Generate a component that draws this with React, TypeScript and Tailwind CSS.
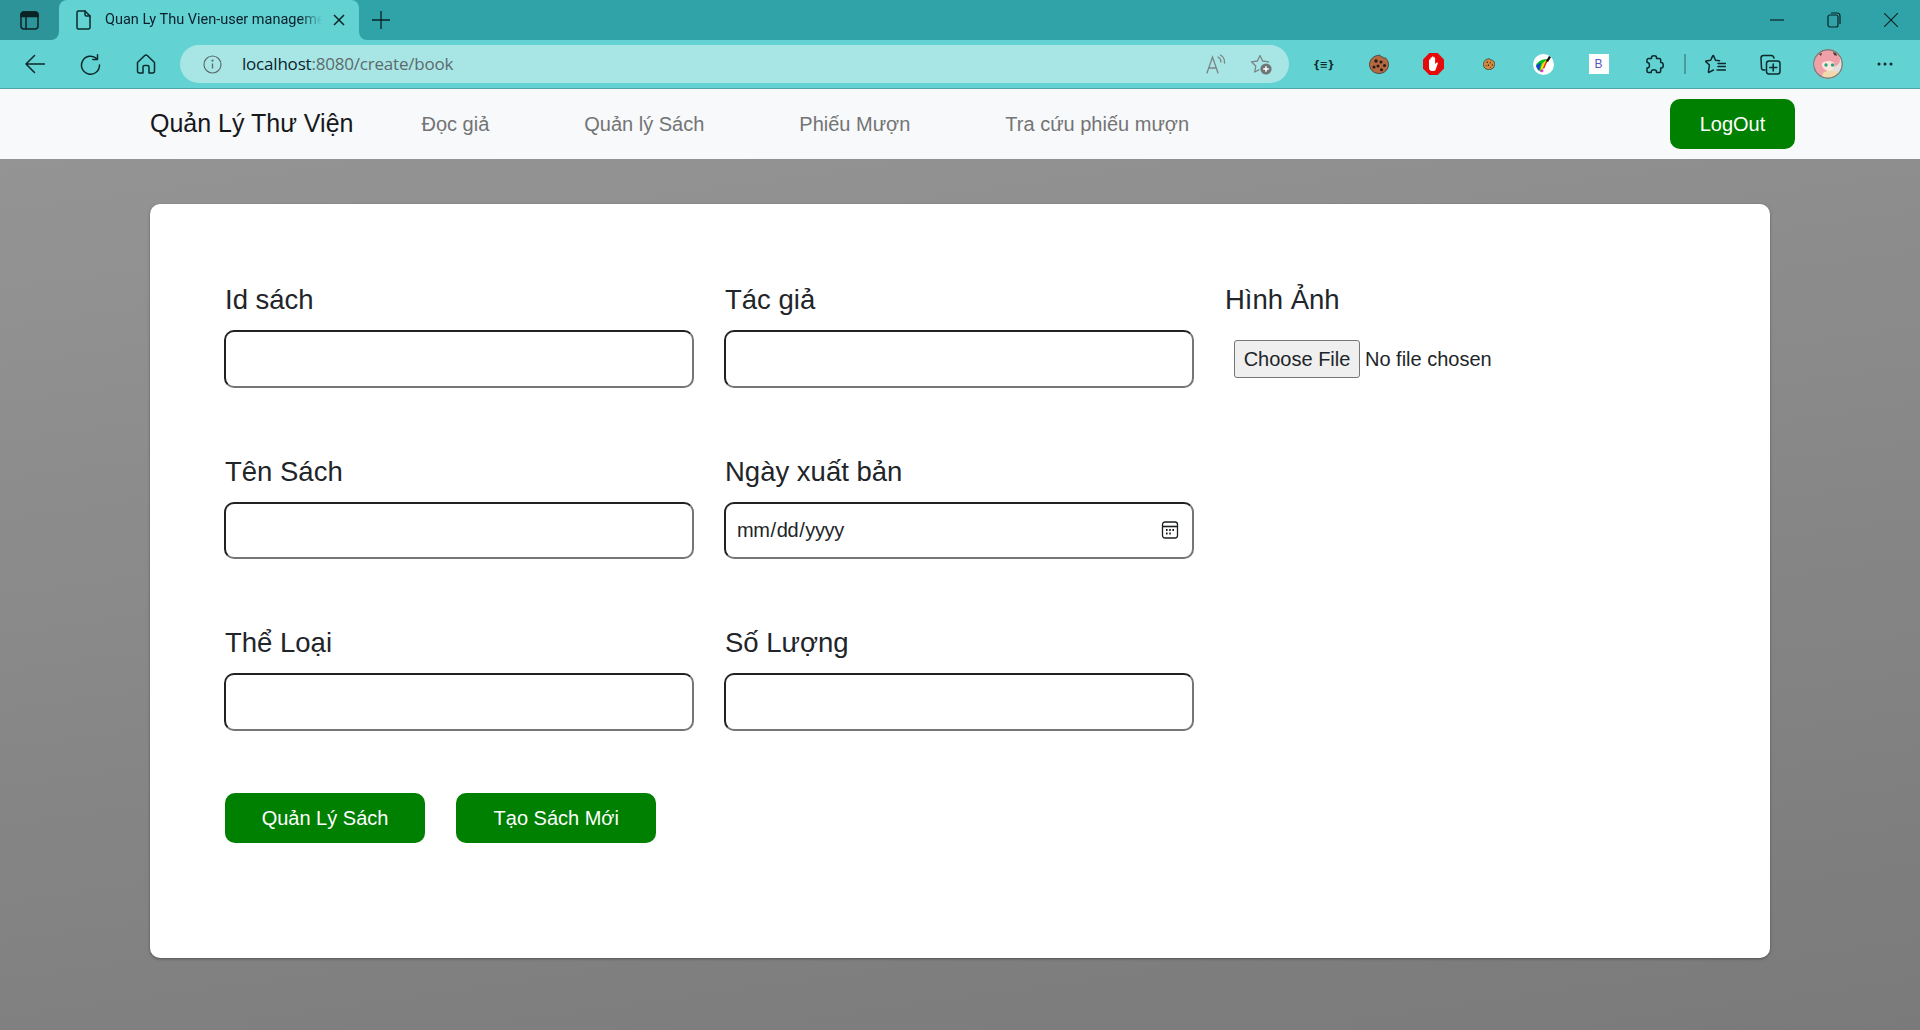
import React from "react";

const ink = "#0c2a2c";

function Stroke({ size, w, h, vb, children, sw = 1.5, color = ink }: { size?: number; w?: number; h?: number; vb: string; children: React.ReactNode; sw?: number; color?: string }) {
  return (
    <svg width={w ?? size} height={h ?? size} viewBox={vb} fill="none" stroke={color} strokeWidth={sw} strokeLinecap="round" strokeLinejoin="round">
      {children}
    </svg>
  );
}

function Cookie({ size, fill, few }: { size: number; fill: string; few?: boolean }) {
  return (
    <svg width={size} height={size} viewBox="0 0 20 20">
      <path d="M11 1.200c.2 1.500 1.600 2 2.400 1.400.5 1.300 2 1.800 2.900 1.100C18.200 5.500 19.500 7.700 19.500 10.500 19.500 15.500 15.500 19.500 10 19.500S.5 15.500.5 10.500 5 1 11 1.200z" fill={fill} stroke="#3f3a36" strokeWidth={few ? 1.2 : 0.8} />
      <circle cx="7" cy="7" r={few ? 1.2 : 1.7} fill="#241a16" />
      <circle cx="12" cy="8" r={few ? 1 : 1.5} fill="#241a16" />
      <circle cx="15.500" cy="11.500" r={few ? 1 : 1.5} fill="#241a16" />
      <circle cx="9" cy="12" r={few ? 1.2 : 1.5} fill="#241a16" />
      <circle cx="5" cy="13" r={few ? 0.8 : 1.5} fill="#241a16" />
      <circle cx="12.500" cy="15.800" r={few ? 0.8 : 1.5} fill="#241a16" />
    </svg>
  );
}

const inputClass =
  "mt-[10px] -ml-px h-[57.5px] w-[calc(100%+1px)] rounded-[10px] border-2 border-[#767676] bg-white px-[10px] text-[20px] text-[#212529] [border-style:inset]";

function Label({ children }: { children: React.ReactNode }) {
  return <span className="h-[41px] text-[27.5px] leading-[41px] text-[#212529]">{children}</span>;
}

function Field({ label, extra = "" }: { label: string; extra?: string }) {
  return (
    <label className={`flex flex-col ${extra}`}>
      <Label>{label}</Label>
      <input type="text" className={inputClass} />
    </label>
  );
}

function Box({ w = "w-[55px]", children }: { w?: string; children?: React.ReactNode }) {
  return <div className={`flex h-full shrink-0 items-center justify-center ${w}`}>{children}</div>;
}

export default function App() {
  return (
    <div className="flex h-screen flex-col overflow-hidden font-['Liberation_Sans',Arial,sans-serif]">
      {/* tab strip */}
      <div className="flex h-[40px] shrink-0 bg-[#62d2d3]">
        <div className="flex w-[59px] items-center justify-center rounded-br-[8px] bg-[#2d9599]">
          <svg width="19" height="19" viewBox="0 0 19 19" fill="none" stroke="#0a2325" strokeWidth="1.500">
            <rect x="1" y="1" width="17" height="17" rx="3" />
            <path d="M1 5.500V4a3 3 0 0 1 3-3h11a3 3 0 0 1 3 3v1.500z" fill="#0a2325" />
            <path d="M6 5.500V18" />
          </svg>
        </div>
        <div className="w-[300px] bg-[linear-gradient(90deg,#2d9599_50%,#30a3a8_50%)]">
          <div className="flex h-full items-center rounded-t-[8px] bg-[#62d2d3] pl-[17px]">
            <Stroke w={15} h={20} vb="0 0 15 20">
              <path d="M2.500 1H9l5 5v11.500a1.500 1.500 0 0 1-1.500 1.500h-10A1.500 1.500 0 0 1 1 17.500v-15A1.500 1.500 0 0 1 2.500 1z" />
              <path d="M9 1v3.500A1.500 1.500 0 0 0 10.500 6H14" />
            </Stroke>
            <span className="ml-[14px] w-[217px] overflow-hidden whitespace-nowrap font-['Roboto',sans-serif] text-[14.500px] text-[#0a1f2a] [mask-image:linear-gradient(90deg,#000_90%,transparent)]">
              Quan Ly Thu Vien-user management
            </span>
            <svg className="ml-[11px]" width="12" height="12" viewBox="0 0 12 12" stroke="#0a2325" strokeWidth="1.500">
              <path d="M1 1l10 10M11 1L1 11" />
            </svg>
          </div>
        </div>
        <div className="flex flex-1 items-center rounded-bl-[8px] bg-[#30a3a8] pr-[1px]">
          <svg className="ml-[13px]" width="18" height="18" viewBox="0 0 18 18" stroke="#0a2325" strokeWidth="1.300">
            <path d="M9 0v18M0 9h18" />
          </svg>
          <div className="ml-auto flex h-full items-center">
            <Box w="w-[57px]">
              <svg width="14" height="2" viewBox="0 0 14 2" stroke="#0a2325" strokeWidth="1.200"><path d="M0 1h14" /></svg>
            </Box>
            <Box w="w-[57px]">
              <svg width="14" height="16" viewBox="0 0 14 16" fill="none" stroke="#0a2325" strokeWidth="1.200">
                <rect x="1" y="3" width="10" height="12" rx="2" />
                <path d="M4 1h6a3 3 0 0 1 3 3v8" />
              </svg>
            </Box>
            <Box w="w-[57px]">
              <svg width="14" height="14" viewBox="0 0 14 14" stroke="#0a2325" strokeWidth="1.100"><path d="M0 0l14 14M14 0L0 14" /></svg>
            </Box>
          </div>
        </div>
      </div>

      {/* toolbar */}
      <div className="flex h-[49px] shrink-0 items-center border-b border-[#4fa5a7] bg-[#62d2d3] pl-[7px]">
        <Box>
          <Stroke w={20} h={20} vb="0 0 20 20">
            <path d="M19.500 10H1M9.500 1.500 1 10l8.500 8.500" />
          </Stroke>
        </Box>
        <Box w="w-[56px]">
          <Stroke w={21} h={21} vb="0 0 21 21">
            <path d="M16.800 4.800A9 9 0 1 0 19.500 11" />
            <path d="M17.500 .8v4.700h-4.700" />
          </Stroke>
        </Box>
        <Box>
          <Stroke w={20} h={20} vb="0 0 20 20">
            <path d="M1.500 8.500 8.700 1.500a2 2 0 0 1 2.600 0l7.200 7V17a2 2 0 0 1-2 2H13v-6a1.500 1.500 0 0 0-1.500-1.500h-3A1.500 1.500 0 0 0 7 13v6H3.500a2 2 0 0 1-2-2z" />
          </Stroke>
        </Box>
        <div className="ml-[7px] flex h-[38px] w-[1109px] items-center rounded-full bg-[#a8e6e6] pl-[23px]">
          <svg width="19" height="19" viewBox="0 0 19 19" fill="none" stroke="#5f6b6c" strokeWidth="1.200">
            <circle cx="9.500" cy="9.500" r="8.500" />
            <path d="M9.500 8.500v5" strokeWidth="1.400" />
            <circle cx="9.500" cy="5.700" r="0.500" />
          </svg>
          <span className="ml-[20px] font-['Open_Sans',sans-serif] text-[17px] tracking-[-0.2px] text-[#5d6a6b]">
            <span className="text-[#0a1f2a]">localhost</span>:8080/create/book
          </span>
          <div className="ml-auto flex items-center gap-[24px] pr-[17px]">
            <svg width="20" height="20" viewBox="0 0 20 20" fill="none" stroke="#7a8586" strokeWidth="1.300" strokeLinecap="round">
              <path d="M1 19 6.500 3l5.500 16M3 14h7" />
              <path d="M12 3a6 6 0 0 1 3 5M14.500 1a8.500 8.500 0 0 1 4 8" />
            </svg>
            <svg width="22" height="21" viewBox="0 0 22 21" fill="none">
              <path d="M10 1.500l2.600 5.500 6 .8-4.400 4.200 1.100 6-5.300-2.900-5.300 2.900 1.100-6L1.400 7.800l6-.8z" stroke="#7a8586" strokeWidth="1.300" strokeLinejoin="round" />
              <circle cx="16" cy="15" r="6.800" fill="#a8e6e6" />
              <circle cx="16" cy="15" r="5.600" fill="#6f7676" />
              <path d="M16 12.200v5.600M13.200 15h5.600" stroke="#fff" strokeWidth="1.500" />
            </svg>
          </div>
        </div>
        <div className="ml-[7px] flex h-full items-center">
          <Box>
            <span className="font-['DejaVu_Sans',sans-serif] text-[10px] font-bold tracking-[-0.5px] text-[#0c2a2c]">{"{≡}"}</span>
          </Box>
          <Box><Cookie size={20} fill="#b5693f" /></Box>
          <Box>
            <svg width="21" height="22" viewBox="0 0 21 22">
              <path d="M6.300 0h8.400L21 6.500v9L14.700 22H6.300L0 15.500v-9z" fill="#e50b0b" />
              <path d="M6 10.500V7c0-1 1.400-1 1.500 0v-2c0-1 1.500-1 1.500 0v-1c0-1 1.600-1 1.600 0v1c.1-1 1.500-1 1.500 0v6l1.300-1.200c.8-.7 1.800.2 1.300 1L12.500 17c-.5.7-1 1-2 1H9c-2 0-3-1.500-3-3.500z" fill="#fff" />
            </svg>
          </Box>
          <Box><Cookie size={12} fill="#cf8a3f" few /></Box>
          <Box>
            <svg width="21" height="21" viewBox="0 0 21 21">
              <circle cx="10.500" cy="10.500" r="10.500" fill="#fff" />
              <path d="M3 11c2-4 7-6 11-6L8 18c-2-1-4-3-5-7z" fill="#00c020" />
              <path d="M3 12c1-1.500 3-3 5-3l-2 7.500c-1-.5-2-2-3-4.500z" fill="#1840e0" />
              <path d="M9 10l5-5-4 9-3 3z" fill="#f7e000" />
              <path d="M10 14l4-9 1 1-4 9z" fill="#f01414" />
              <path d="M7 17l3-2 .5 2-1.500 1.500z" fill="#f020e0" />
              <path d="M13 7l3-5 2 1.200L15 8z" fill="#111" />
            </svg>
          </Box>
          <Box>
            <div className="flex h-[20px] w-[20px] items-center justify-center bg-white text-[12px] text-[#5a55c0]">B</div>
          </Box>
          <Box>
            <Stroke w={20} h={21} vb="0 0 20 21">
              <path d="M7.500 4.500V3.500C7.500 1.200 12.500 1.200 12.500 3.500v1h2.700a1.500 1.500 0 0 1 1.500 1.500v2.500h.6c2.600 0 2.600 5.500 0 5.500h-.6v3a1.500 1.500 0 0 1-1.500 1.500h-2.700v-.8c0-2.700-5.200-2.700-5.200 0v.8H4.500A1.500 1.500 0 0 1 3 17v-3h.5c2.600 0 2.600-5.500 0-5.500H3V6a1.500 1.500 0 0 1 1.500-1.500z" />
            </Stroke>
          </Box>
          <Box w="w-[8px]"><div className="h-[20px] w-[1.500px] bg-[#4b9a9c]" /></Box>
          <Box w="w-[53px]">
            <Stroke w={21} h={20} vb="0 0 21 20">
              <path d="M14.500 6.800 10.500 6.200 8.500 1.600a.4.4 0 0 0-.7 0L5.700 6.200 1 6.900a.4.4 0 0 0-.2.700L4.400 11 3.400 18a.4.4 0 0 0 .6.4L8.500 16" />
              <path d="M13 9.500h7.500M13 12.500h7.500M12 16h8.500" />
            </Stroke>
          </Box>
          <Box w="w-[56px]">
            <Stroke w={21} h={21} vb="0 0 21 21">
              <path d="M5 16 3.500 16A2 2 0 0 1 1.500 14.500L1 4c0-1.500 1-2.500 2.500-2.500h8c1.500 0 2 .8 2.500 2.500" />
              <rect x="6.500" y="7" width="13.500" height="13" rx="2.500" />
              <path d="M13.200 10v7M9.800 13.500h7" />
            </Stroke>
          </Box>
          <Box w="w-[60px]">
            <svg width="30" height="30" viewBox="0 0 30 30">
              <clipPath id="av"><circle cx="15" cy="15" r="15" /></clipPath>
              <g clipPath="url(#av)">
                <rect width="30" height="30" fill="#e4dfd8" />
                <path d="M2 30V13C2 5 8 1 15 1s12 3 12 10c0 3-2 5-4 6-4 1-8 2-11 8l-2 5z" fill="#f0a0a8" />
                <path d="M9 14c3-2 9-3 12 0 1 4-1 8-5 8s-8-4-7-8z" fill="#fbe6dc" />
                <path d="M10 24c4-3 11-3 15 0l2 6H8z" fill="#f2d9ad" />
                <circle cx="13" cy="16" r="1.700" fill="#2fa37f" />
                <circle cx="19.500" cy="16" r="1.700" fill="#2fa37f" />
                <path d="M20 3l3 1 1 3-3-1z" fill="#4a3b30" />
                <path d="M6 5l3-1-1 3z" fill="#4a3b30" />
              </g>
              <circle cx="15" cy="15" r="14.300" fill="none" stroke="#71807f" strokeWidth="1.400" />
            </svg>
          </Box>
          <Box w="w-[54px]">
            <svg width="16" height="4" viewBox="0 0 16 4" fill="#0c2a2c">
              <circle cx="2" cy="2" r="1.500" /><circle cx="8" cy="2" r="1.500" /><circle cx="14" cy="2" r="1.500" />
            </svg>
          </Box>
        </div>
      </div>

      {/* navbar */}
      <nav className="flex h-[70px] shrink-0 items-center bg-[#f8f9fa] pl-[150px] pr-[125px]">
        <span className="text-[25px] text-[#16181a]">Quản Lý Thư Viện</span>
        <div className="ml-[68px] flex gap-[95px] text-[20px] text-[#737475]">
          <span>Đọc giả</span>
          <span>Quản lý Sách</span>
          <span>Phiếu Mượn</span>
          <span>Tra cứu phiếu mượn</span>
        </div>
        <button className="ml-auto h-[50px] w-[125px] rounded-[10px] bg-[#008000] text-[20px] text-white">LogOut</button>
      </nav>

      {/* page */}
      <main className="flex-1 bg-[linear-gradient(172deg,#949494,#7a7a7a)] pl-[150px] pt-[45px]">
        <form className="w-[1620px] rounded-[10px] bg-white px-[75px] pb-[115px] pt-[75px] shadow-[0_1px_3px_rgba(0,0,0,0.35)]">
          <div className="grid grid-cols-[468.750px_468.750px_468.750px] gap-x-[31.250px] gap-y-[63px]">
            <Field label="Id sách" />
            <Field label="Tác giả" />
            <label className="flex flex-col">
              <Label>Hình Ảnh</Label>
              <div className="mt-[10px] flex h-[57.5px] items-center pl-[9px]">
                <input
                  type="file"
                  className="w-full text-[20px] text-[#212529] file:mr-[5px] file:h-[38px] file:w-[126px] file:rounded-[3px] file:border file:border-[#767676] file:bg-[#efefef] file:text-[20px] file:text-[#212529]"
                />
              </div>
            </label>
            <Field label="Tên Sách" />
            <label className="flex flex-col">
              <Label>Ngày xuất bản</Label>
              <div className="relative flex">
                <input
                  type="date"
                  className={`${inputClass} tracking-[-0.4px] [&::-webkit-calendar-picker-indicator]:opacity-0`}
                />
                <svg className="pointer-events-none absolute right-[15px] top-[29px]" width="18" height="18" viewBox="0 0 18 18" fill="none" stroke="#1b1e21" strokeWidth="1.300">
                  <rect x="1.500" y="1" width="15" height="16" rx="2.500" />
                  <path d="M1.500 5.500h15" strokeWidth="1.600" />
                  <path d="M5 9h1.600M8.200 9h1.600M11.400 9h1.600M5 12.500h1.600M8.200 12.500h1.600" strokeWidth="1.800" />
                </svg>
              </div>
            </label>
            <Field label="Thể Loại" extra="col-start-1" />
            <Field label="Số Lượng" />
          </div>
          <div className="mt-[62.500px] flex gap-[31.250px]">
            <button type="button" className="h-[50px] w-[200px] rounded-[10px] bg-[#008000] text-[20px] text-white">Quản Lý Sách</button>
            <button type="button" className="h-[50px] w-[200px] rounded-[10px] bg-[#008000] text-[20px] text-white">Tạo Sách Mới</button>
          </div>
        </form>
      </main>
    </div>
  );
}
